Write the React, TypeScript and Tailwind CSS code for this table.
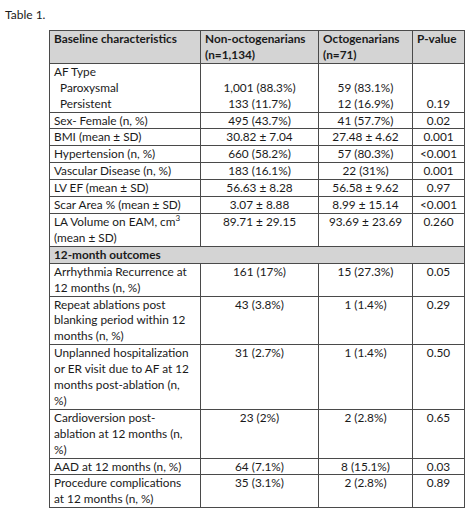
const rows: { label: React.ReactNode; a: React.ReactNode; b: React.ReactNode; p: React.ReactNode }[] = [
  {
    label: (
      <>
        AF Type
        <br />
        <span className="pl-[6px]">Paroxysmal</span>
        <br />
        <span className="pl-[6px]">Persistent</span>
      </>
    ),
    a: (
      <>
        <br />
        1,001 (88.3%)
        <br />
        133 (11.7%)
      </>
    ),
    b: (
      <>
        <br />
        59 (83.1%)
        <br />
        12 (16.9%)
      </>
    ),
    p: (
      <>
        <br />
        <br />
        0.19
      </>
    ),
  },
  { label: "Sex- Female (n, %)", a: "495 (43.7%)", b: "41 (57.7%)", p: "0.02" },
  { label: "BMI (mean ± SD)", a: "30.82 ± 7.04", b: "27.48 ± 4.62", p: "0.001" },
  { label: "Hypertension (n, %)", a: "660 (58.2%)", b: "57 (80.3%)", p: "<0.001" },
  { label: "Vascular Disease (n, %)", a: "183 (16.1%)", b: "22 (31%)", p: "0.001" },
  { label: "LV EF (mean ± SD)", a: "56.63 ± 8.28", b: "56.58 ± 9.62", p: "0.97" },
  { label: "Scar Area % (mean ± SD)", a: "3.07 ± 8.88", b: "8.99 ± 15.14", p: "<0.001" },
  {
    label: (
      <>
        LA Volume on EAM, cm<span className="relative -top-[5px] text-[8px] leading-none">3</span>
        <br />
        (mean ± SD)
      </>
    ),
    a: "89.71 ± 29.15",
    b: "93.69 ± 23.69",
    p: "0.260",
  },
];

const outcomes: { label: React.ReactNode; a: string; b: string; p: string }[] = [
  { label: <>Arrhythmia Recurrence at<br />12 months (n, %)</>, a: "161 (17%)", b: "15 (27.3%)", p: "0.05" },
  {
    label: <>Repeat ablations post<br />blanking period within 12<br />months (n, %)</>,
    a: "43 (3.8%)",
    b: "1 (1.4%)",
    p: "0.29",
  },
  {
    label: <>Unplanned hospitalization<br />or ER visit due to AF at 12<br />months post-ablation (n,<br />%)</>,
    a: "31 (2.7%)",
    b: "1 (1.4%)",
    p: "0.50",
  },
  {
    label: <>Cardioversion post-<br />ablation at 12 months (n,<br />%)</>,
    a: "23 (2%)",
    b: "2 (2.8%)",
    p: "0.65",
  },
  { label: "AAD at 12 months (n, %)", a: "64 (7.1%)", b: "8 (15.1%)", p: "0.03" },
  { label: <>Procedure complications<br />at 12 months (n, %)</>, a: "35 (3.1%)", b: "2 (2.8%)", p: "0.89" },
];

const cell = "border border-[#4a4a4a] align-top px-[4px] py-0 whitespace-nowrap overflow-hidden";

const Row = ({ r }: { r: { label: React.ReactNode; a: React.ReactNode; b: React.ReactNode; p: React.ReactNode } }) => (
  <tr>
    <td className={cell}>{r.label}</td>
    <td className={cell + " text-center"}>{r.a}</td>
    <td className={cell + " text-center"}>{r.b}</td>
    <td className={cell + " text-center"}>{r.p}</td>
  </tr>
);

export default function App() {
  return (
    <div className="w-[474px] h-[513px] bg-white text-[#1a1a1a] font-['Lato',sans-serif] text-[11.8px] leading-[15.9px] overflow-hidden">
      <div className="pl-[5px] pt-[7px] h-[30px] text-[12px]">Table 1.</div>
      <table className="ml-[49px] border-collapse border border-[#4a4a4a] w-[415px] table-fixed">
        <colgroup>
          <col className="w-[151px]" />
          <col className="w-[118px]" />
          <col className="w-[94px]" />
          <col className="w-[52px]" />
        </colgroup>
        <thead>
          <tr className="bg-[#d4d4d4] font-bold">
            <td className={cell}>Baseline characteristics</td>
            <td className={cell}>
              Non-octogenarians
              <br />
              (n=1,134)
            </td>
            <td className={cell}>
              Octogenarians
              <br />
              (n=71)
            </td>
            <td className={cell}>P-value</td>
          </tr>
        </thead>
        <tbody>
          {rows.map((r, i) => (
            <Row key={i} r={r} />
          ))}
          <tr className="bg-[#d4d4d4] font-bold">
            <td className={cell} colSpan={4}>
              12-month outcomes
            </td>
          </tr>
          {outcomes.map((r, i) => (
            <Row key={i} r={r} />
          ))}
        </tbody>
      </table>
    </div>
  );
}
